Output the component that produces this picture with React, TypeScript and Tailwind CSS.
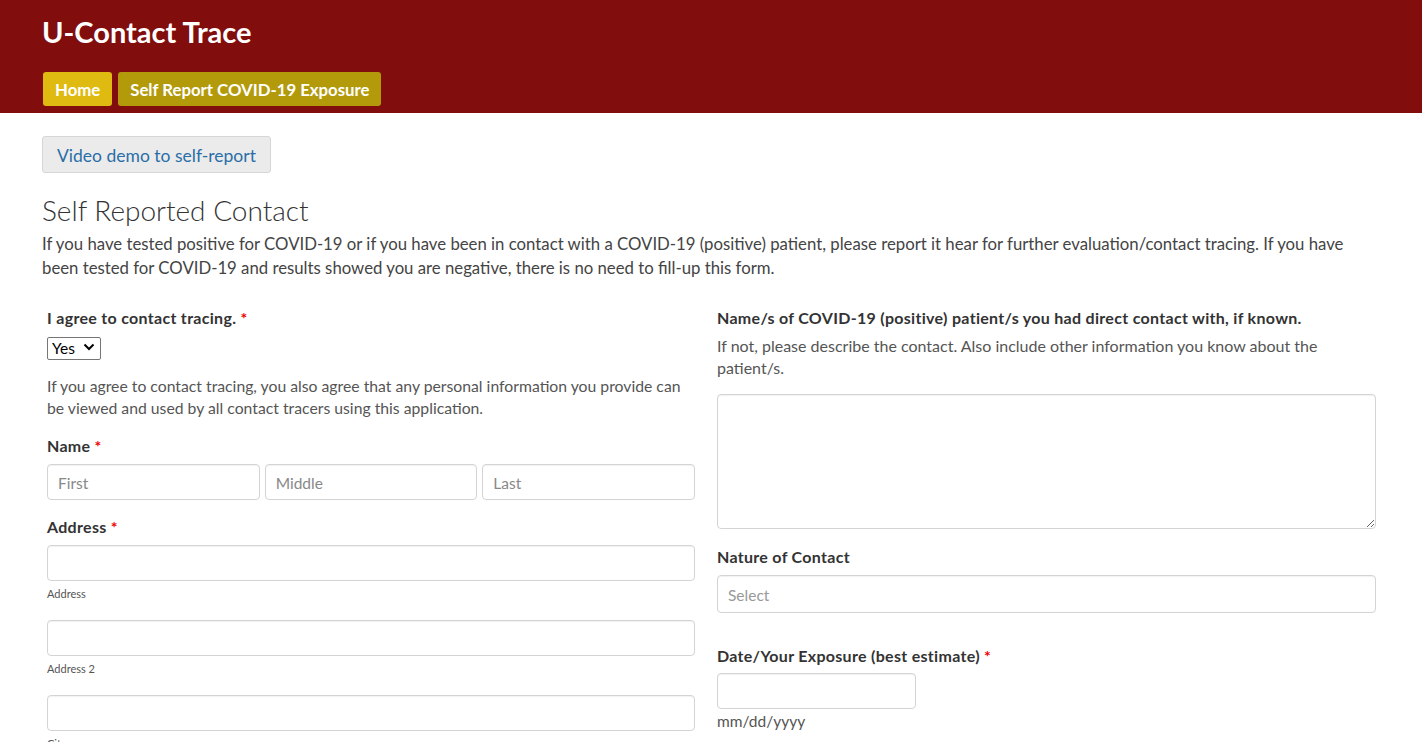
import React from "react";

function Req() {
  return <span className="text-[#e00]"> *</span>;
}

function Label({ children }: { children: React.ReactNode }) {
  return (
    <div className="text-[16px] font-bold leading-[22px] tracking-[0.3px] text-[#333]">
      {children}
    </div>
  );
}

function TextInput({
  placeholder,
  className = "",
}: {
  placeholder?: string;
  className?: string;
}) {
  return (
    <input
      type="text"
      placeholder={placeholder}
      className={`h-[36px] rounded-[4px] border border-[#d4d4d4] bg-white px-[10px] pt-[2px] text-[15.5px] text-[#333] shadow-[inset_0_1px_1px_rgba(0,0,0,0.06)] outline-none placeholder:text-[#888] ${className}`}
    />
  );
}

export default function App() {
  return (
    <div className="min-h-screen bg-white font-['Lato','Open_Sans',sans-serif] text-[#333]">
      <header className="bg-[#820d0d] px-[42px] pb-[7px] pt-[14px]">
        <h1 className="text-[29px] font-bold leading-[36px] text-white">
          U-Contact Trace
        </h1>
        <nav className="mt-[22px] flex gap-[6px] pl-[1px]">
          <a className="flex h-[34px] items-center rounded-[3px] bg-[#dfba10] px-[12px] pt-[1px] text-[16.75px] font-bold text-white">
            Home
          </a>
          <a className="flex h-[34px] items-center rounded-[3px] bg-[#b39a0a] px-[12px] pt-[1px] text-[16.75px] font-bold text-white">
            Self Report COVID-19 Exposure
          </a>
        </nav>
      </header>

      <main className="pl-[42px] pr-[46px] pt-[23px]">
        <button
          type="button"
          className="h-[37px] rounded-[3px] border border-[#d6d6d6] bg-[#ebebeb] px-[14px] pt-[3px] text-[17.5px] text-[#2a6ea8]"
        >
          Video demo to self-report
        </button>

        <h2 className="mt-[19px] text-[28px] font-light leading-[36px] text-[#333]">
          Self Reported Contact
        </h2>
        <p className="mt-[4px] text-[16.75px] leading-[24px] text-[#444]">
          If you have tested positive for COVID-19 or if you have been in
          contact with a COVID-19 (positive) patient, please report it hear for
          further evaluation/contact tracing. If you have been tested for
          COVID-19 and results showed you are negative, there is no need to
          fill-up this form.
        </p>

        <div className="mt-[27px] flex gap-[22px] pl-[5px]">
          <div className="flex w-[648px] shrink-0 flex-col">
            <Label>
              I agree to contact tracing.
              <Req />
            </Label>
            <div className="relative mt-[7px] h-[23px] w-[54px]">
              <select className="h-full w-full appearance-none rounded-[2px] border border-[#767676] bg-white pl-[4px] text-[15.5px] leading-[21px] text-black outline-none">
                <option>Yes</option>
                <option>No</option>
              </select>
              <svg
                className="pointer-events-none absolute right-[6px] top-[7px]"
                width="12"
                height="8"
                viewBox="0 0 12 8"
              >
                <path
                  d="M1.5 1.5 L6 6 L10.5 1.5"
                  fill="none"
                  stroke="#000"
                  strokeWidth="2"
                />
              </svg>
            </div>
            <p className="mt-[16px] text-[15.75px] leading-[22px] text-[#555]">
              If you agree to contact tracing, you also agree that any personal
              information you provide can be viewed and used by all contact
              tracers using this application.
            </p>

            <div className="mt-[16px]">
              <Label>
                Name
                <Req />
              </Label>
            </div>
            <div className="mt-[7px] grid grid-cols-3 gap-[5px]">
              <TextInput placeholder="First" />
              <TextInput placeholder="Middle" />
              <TextInput placeholder="Last" />
            </div>

            <div className="mt-[16px]">
              <Label>
                Address
                <Req />
              </Label>
            </div>
            <TextInput className="mt-[7px] w-full" />
            <div className="mt-[5px] text-[11px] leading-[16px] text-[#555]">
              Address
            </div>
            <TextInput className="mt-[18px] w-full" />
            <div className="mt-[5px] text-[11px] leading-[16px] text-[#555]">
              Address 2
            </div>
            <TextInput className="mt-[18px] w-full" />
            <div className="mt-[5px] text-[11px] leading-[16px] text-[#555]">
              City
            </div>
          </div>

          <div className="flex min-w-0 flex-1 flex-col">
            <Label>
              Name/s of COVID-19 (positive) patient/s you had direct contact
              with, if known.
            </Label>
            <p className="mt-[6px] text-[16px] leading-[22px] text-[#555]">
              If not, please describe the contact. Also include other
              information you know about the patient/s.
            </p>
            <textarea className="mt-[15px] h-[135px] w-full rounded-[4px] border border-[#d4d4d4] shadow-[inset_0_1px_1px_rgba(0,0,0,0.06)] outline-none" />

            <div className="mt-[17px]">
              <Label>Nature of Contact</Label>
            </div>
            <div className="mt-[7px] flex h-[38px] items-center rounded-[4px] border border-[#d4d4d4] px-[10px] pt-[3px] text-[15.5px] text-[#999] shadow-[inset_0_1px_1px_rgba(0,0,0,0.06)]">
              Select
            </div>

            <div className="mt-[32px]">
              <Label>
                Date/Your Exposure (best estimate)
                <Req />
              </Label>
            </div>
            <TextInput className="mt-[6px] w-[199px]" />
            <div className="mt-[1px] text-[15.5px] leading-[22px] text-[#555]">
              mm/dd/yyyy
            </div>
          </div>
        </div>
      </main>
    </div>
  );
}
